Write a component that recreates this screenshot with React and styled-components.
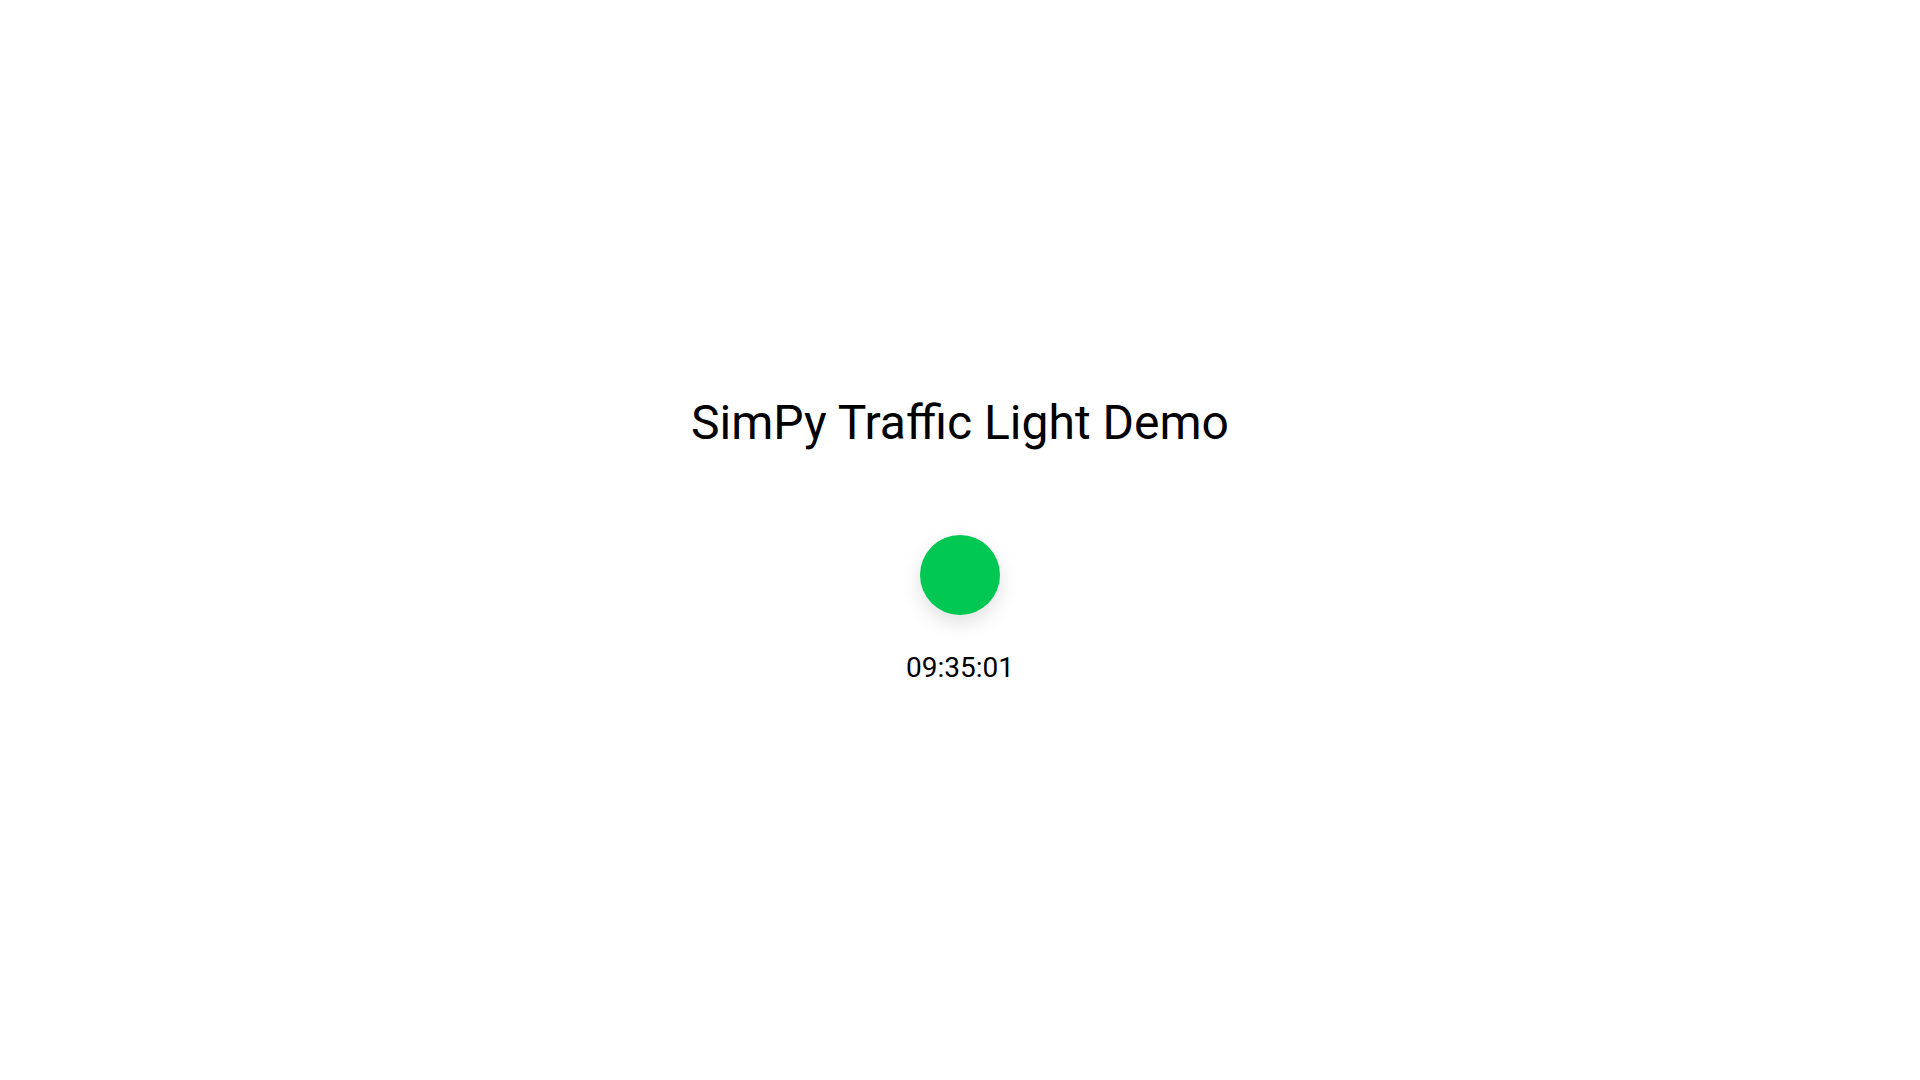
import React from "react";
import styled, { createGlobalStyle } from "styled-components";

const Global = createGlobalStyle`
  html, body { margin: 0; padding: 0; background: #ffffff; }
  body { font-family: Roboto, "Noto Sans", sans-serif; color: #000; }
`;

const Page = styled.main`
  min-height: 100vh;
  box-sizing: border-box;
  padding-bottom: 2px;
  display: flex;
  flex-direction: column;
  align-items: center;
  justify-content: center;
`;

const Title = styled.h1`
  margin: 0 0 84px;
  font-size: 48px;
  font-weight: 400;
  line-height: normal;
`;

const Light = styled.div`
  width: 80px;
  height: 80px;
  border-radius: 50%;
  background: ${(p) => p.$color};
  box-shadow: 0 8px 20px rgba(0, 0, 0, 0.12);
  margin-bottom: 36px;
`;

const Clock = styled.div`
  font-size: 28px;
  line-height: normal;
`;

export default function App() {
  return (
    <>
      <Global />
      <Page>
        <Title>SimPy Traffic Light Demo</Title>
        <Light $color="#00c853" />
        <Clock>09:35:01</Clock>
      </Page>
    </>
  );
}
